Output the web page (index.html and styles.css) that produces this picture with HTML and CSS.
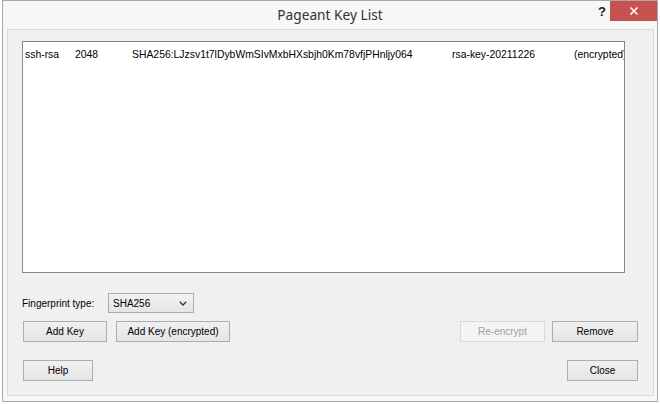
FILE: index.html
```html
<!DOCTYPE html>
<html>
<head>
<meta charset="utf-8">
<title>Pageant Key List</title>
<link rel="stylesheet" href="styles.css">
</head>
<body>
<div class="window">
  <div class="titlebar">
    <div class="title">Pageant Key List</div>
    <div class="help-q">?</div>
    <div class="close-x">
      <svg width="10" height="10" viewBox="0 0 10 10"><path d="M1.5 1.5 L8.5 8.5 M8.5 1.5 L1.5 8.5" stroke="#fff" stroke-width="1.6"/></svg>
    </div>
  </div>
  <div class="client">
    <div class="listbox">
      <div class="row">
        <span class="c1">ssh-rsa</span><span class="c2">2048</span><span class="c3">SHA256:LJzsv1t7lDybWmSIvMxbHXsbjh0Km78vfjPHnljy064</span><span class="c4">rsa-key-20211226</span><span class="c5">(encrypted)</span>
      </div>
    </div>
    <div class="fp-row">
      <span class="fp-label">Fingerprint type:</span>
      <div class="select">
        <span>SHA256</span>
        <svg class="chev" width="8" height="5" viewBox="0 0 8 5"><path d="M0.8 0.8 L4 4 L7.2 0.8" fill="none" stroke="#333" stroke-width="1.3"/></svg>
      </div>
    </div>
    <div class="btn-row row1">
      <button class="btn w-add">Add Key</button>
      <button class="btn w-adde">Add Key (encrypted)</button>
      <span class="spacer"></span>
      <button class="btn w-reenc" disabled>Re-encrypt</button>
      <button class="btn w-remove">Remove</button>
    </div>
    <div class="btn-row row2">
      <button class="btn w-help">Help</button>
      <span class="spacer"></span>
      <button class="btn w-close">Close</button>
    </div>
  </div>
</div>
</body>
</html>
```

FILE: styles.css
```css
html, body {
  margin: 0;
  padding: 0;
}
body {
  width: 660px;
  height: 404px;
  overflow: hidden;
  background: #ffffff;
  font-family: "Liberation Sans", Arial, sans-serif;
  font-size: 10px;
  color: #000;
}
.window {
  margin-left: 2px;
  width: 656px;
  height: 402px;
  box-sizing: border-box;
  border: 1px solid #a9a9a9;
  background: #f7f7f7;
  display: flex;
  flex-direction: column;
}
.titlebar {
  height: 28px;
  position: relative;
  flex: none;
}
.title {
  text-align: center;
  font-family: "Noto Sans", "Open Sans", sans-serif;
  font-size: 13.7px;
  line-height: 28px;
  color: #333;
}
.help-q {
  position: absolute;
  left: 595px;
  top: 3px;
  font-family: "Liberation Sans", Arial, sans-serif;
  font-weight: bold;
  font-size: 13px;
  color: #222;
}
.close-x {
  position: absolute;
  left: 607px;
  top: 0;
  width: 47px;
  height: 20px;
  background: #c75050;
  display: flex;
  align-items: center;
  justify-content: center;
}
.client {
  flex: 1;
  margin: 0 3px 5px 4px;
  border: 1px solid #dadada;
  background: #f0f0f0;
  padding: 11px 15px 0 14px;
  display: flex;
  flex-direction: column;
}
.listbox {
  width: 603px;
  height: 232px;
  box-sizing: border-box;
  border: 1px solid #828790;
  background: #fff;
  overflow: hidden;
}
.row {
  white-space: nowrap;
  padding: 6px 0 0 2px;
  line-height: 13px;
  font-size: 10.4px;
}
.row span {
  display: inline-block;
}
.c1 { width: 50px; }
.c2 { width: 57px; }
.c3 { width: 320px; }
.c4 { width: 122px; }
.fp-row {
  margin-top: 20px;
  height: 20px;
  display: flex;
  align-items: center;
}
.fp-label {
  width: 86px;
}
.select {
  width: 86px;
  height: 20px;
  box-sizing: border-box;
  border: 1px solid #acacac;
  background: linear-gradient(#f2f2f2, #e5e5e5);
  display: flex;
  align-items: center;
  justify-content: space-between;
  padding: 0 6px 0 4px;
}
.btn-row {
  display: flex;
  height: 21px;
  padding-left: 1px;
}
.row1 { margin-top: 8px; }
.row2 { margin-top: 18px; }
.spacer { flex: 1; }
.btn {
  height: 21px;
  box-sizing: border-box;
  border: 1px solid #adadad;
  background: linear-gradient(#f0f0f0, #e5e5e5);
  font-family: "Liberation Sans", Arial, sans-serif;
  font-size: 10px;
  color: #000;
  padding: 0;
  margin: 0;
}
.btn:disabled {
  border-color: #d9d9d9;
  background: #f4f4f4;
  color: #a0a0a0;
}
.w-add { width: 84px; }
.w-adde { width: 114px; margin-left: 9px; }
.w-reenc { width: 85px; }
.w-remove { width: 86px; margin-left: 7px; }
.w-help { width: 70px; }
.w-close { width: 71px; }
```
